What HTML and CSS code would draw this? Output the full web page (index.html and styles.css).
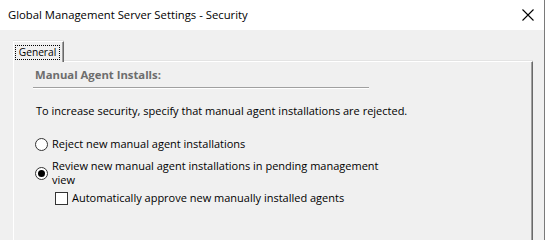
FILE: index.html
```html
<!DOCTYPE html>
<html>
<head>
<meta charset="utf-8">
<link rel="stylesheet" href="styles.css">
</head>
<body>
<div class="window">
  <div class="titlebar">
    <span class="title">Global Management Server Settings - Security</span>
    <svg class="close" width="12" height="12" viewBox="0 0 12 12"><path d="M0.5 0.5 L11.5 11.5 M11.5 0.5 L0.5 11.5" stroke="#000" stroke-width="1.1" fill="none"/></svg>
  </div>
  <div class="client">
    <div class="tabs">
      <div class="tab"><span class="tab-label">General</span></div>
    </div>
    <div class="panel">
      <div class="group-head">Manual Agent Installs:</div>
      <div class="divider"></div>
      <p class="desc">To increase security, specify that manual agent installations are rejected.</p>
      <div class="option option-one">
        <span class="radio"></span>
        <span class="label">Reject new manual agent installations</span>
      </div>
      <div class="option option-two">
        <span class="radio checked"></span>
        <span class="label">Review new manual agent installations in pending management<br>view</span>
      </div>
      <div class="option sub">
        <span class="checkbox"></span>
        <span class="label">Automatically approve new manually installed agents</span>
      </div>
    </div>
  </div>
</div>
</body>
</html>
```
FILE: styles.css
```css
* { box-sizing: border-box; }
html, body { margin: 0; padding: 0; }
body {
  width: 545px;
  height: 240px;
  overflow: hidden;
  font-family: "Open Sans", "Noto Sans", sans-serif;
  font-size: 11px;
  color: #000;
}
.window {
  width: 545px;
  height: 240px;
  border-right: 1px solid #7a7a7a;
  display: flex;
  flex-direction: column;
  background: #f0f0f0;
}
.titlebar {
  height: 30px;
  background: #fff;
  display: flex;
  align-items: center;
  justify-content: space-between;
  padding: 0 10px 0 8px;
  flex: none;
}
.title {
  font-size: 11.3px;
  margin-top: -2px;
}
.close { display: block; margin-top: -1px; }
.client {
  flex: 1;
  padding: 11px 11px 0 13px;
  display: flex;
  flex-direction: column;
}
.tabs { display: flex; height: 20px; }
.tab {
  width: 51px;
  height: 21px;
  border-top: 1px solid #fff;
  border-left: 1px solid #fff;
  border-right: 1px solid #696969;
  box-shadow: inset -1px 0 #a0a0a0, 0 -1px #e3e3e3;
  padding: 3px 3px 0 1px;
  background: #f0f0f0;
  position: relative;
  z-index: 1;
}
.tab-label {
  display: block;
  border: 1px dotted #000;
  height: 15px;
  line-height: 13px;
  text-align: center;
  font-size: 10.2px;
  white-space: nowrap;
}
.panel {
  flex: 1;
  border-top: 1px solid #fff;
  border-left: 1px solid #fff;
  border-right: 1px solid #696969;
  box-shadow: inset -1px 0 #a0a0a0, 0 -1px #e3e3e3;
  padding: 4px 0 0 21px;
}
.group-head {
  font-weight: bold;
  color: #6d6d6d;
  font-size: 11.3px;
  height: 18px;
  line-height: 18px;
}
.divider {
  width: 336px;
  margin-left: -2px;
  height: 2px;
  border-top: 1px solid #a0a0a0;
  border-bottom: 1px solid #fff;
  margin-top: 3px;
}
.desc {
  margin: 14px 0 0 1px;
  line-height: 16px;
}
.option {
  display: flex;
  align-items: center;
  gap: 4px;
}
.option-one { margin-top: 18px; }
.option-two { margin-top: 8px; }
.option .label { line-height: 14px; }
.radio {
  width: 13px;
  height: 13px;
  border: 1px solid #333;
  border-radius: 50%;
  background: #fff;
  flex: none;
  position: relative;
}
.radio.checked::after {
  content: "";
  position: absolute;
  left: 2px;
  top: 2px;
  width: 7px;
  height: 7px;
  border-radius: 50%;
  background: #000;
}
.sub { margin: 4px 0 0 20px; }
.checkbox {
  width: 13px;
  height: 13px;
  border: 1px solid #333;
  background: #fff;
  flex: none;
}
```
